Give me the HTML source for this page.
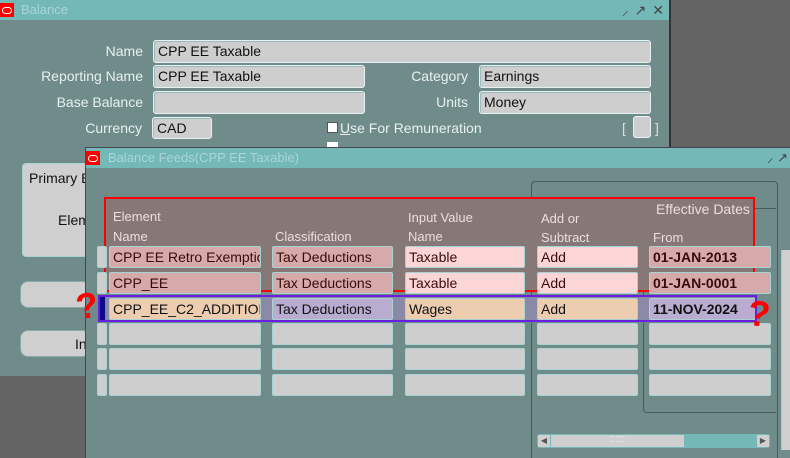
<!DOCTYPE html>
<html style="width:790px;height:458px;overflow:hidden"><head><style>
*{margin:0;padding:0;box-sizing:border-box}
body{width:790px;height:458px;position:relative;overflow:hidden;background:#646464;font-family:"Liberation Sans",sans-serif;font-size:14px}
.a{position:absolute}
.lbl{position:absolute;color:#e8f0f0;text-align:right;white-space:nowrap}
.f{position:absolute;background:#cecece;border:1px solid #e6f2f2;border-radius:3px;color:#111;padding:2px 4px;white-space:nowrap;overflow:hidden;line-height:17px;box-shadow:inset 1px 1px 0 #9bb}
.c{position:absolute;background:#cecece;border:1px solid #a9d2d2;border-radius:2px;color:#3a0a0a;padding:0 3px;white-space:nowrap;overflow:hidden;line-height:20px;font-size:14px}
.title{position:absolute;background:#74b8b8;color:#a9d6d6;font-size:13px;line-height:20px}
.logo{position:absolute;background:#f00;width:14px;height:14px;top:3px;left:0}
.logo:after{content:"";position:absolute;left:2px;top:4px;width:8px;height:5px;border:1.5px solid #fff;border-radius:4px}
.h{position:absolute;color:#ecdede;font-size:13px}
</style></head><body>
<div class="a" style="left:0;top:0;width:671px;height:376px;background:#6f8c8a;border-right:2px solid #333"></div>
<div class="title" style="left:0;top:0;width:669px;height:20px"><div class="logo"></div><span style="position:absolute;left:21px">Balance</span>
<span style="position:absolute;right:4px;top:0;color:#444;font-size:14px;letter-spacing:1px">⸝ ↗ ✕</span></div>
<div class="lbl" style="left:0;width:143px;top:43px">Name</div>
<div class="lbl" style="left:0;width:143px;top:68px">Reporting Name</div>
<div class="lbl" style="left:0;width:143px;top:94px">Base Balance</div>
<div class="lbl" style="left:0;width:142px;top:120px">Currency</div>
<div class="f" style="left:153px;top:40px;width:498px;height:23px">CPP EE Taxable</div>
<div class="f" style="left:153px;top:65px;width:212px;height:23px">CPP EE Taxable</div>
<div class="f" style="left:153px;top:91px;width:212px;height:23px"></div>
<div class="f" style="left:152px;top:117px;width:60px;height:22px">CAD</div>
<div class="lbl" style="left:380px;width:88px;top:68px">Category</div>
<div class="lbl" style="left:380px;width:88px;top:94px">Units</div>
<div class="f" style="left:479px;top:65px;width:172px;height:23px">Earnings</div>
<div class="f" style="left:479px;top:91px;width:172px;height:23px">Money</div>
<div class="a" style="left:327px;top:122px;width:11px;height:11px;background:#fff;border:1px solid #555"></div>
<div class="lbl" style="left:340px;top:120px;text-align:left"><u>U</u>se For Remuneration</div>
<div class="a" style="left:327px;top:142px;width:11px;height:5px;background:#fff"></div>
<div class="lbl" style="left:622px;top:120px;color:#ddd">[</div>
<div class="a" style="left:633px;top:116px;width:18px;height:22px;background:#cecece;border:1px solid #e6f2f2;border-radius:3px"></div>
<div class="lbl" style="left:655px;top:120px;color:#ddd">]</div>
<div class="a" style="left:22px;top:163px;width:70px;height:94px;background:#cfcfcf;border:1px solid #a9d2d2;border-radius:4px"></div>
<div class="a" style="left:29px;top:170px;color:#111">Primary B</div>
<div class="a" style="left:58px;top:212px;color:#111">Elem</div>
<div class="a" style="left:20px;top:281px;width:70px;height:27px;background:#cfcfcf;border:1px solid #8aa;border-radius:8px"></div>
<div class="a" style="left:20px;top:330px;width:70px;height:27px;background:#cfcfcf;border:1px solid #8aa;border-radius:8px"></div>
<div class="a" style="left:75px;top:336px;color:#111">In</div>
<div class="a" style="left:85px;top:147px;width:705px;height:311px;background:#6f8c8a;border-left:1px solid #445;border-top:1px solid #445"></div>
<div class="title" style="left:86px;top:148px;width:704px;height:20px"><div class="logo"></div><span style="position:absolute;left:22px">Balance Feeds(CPP EE Taxable)</span>
<span style="position:absolute;right:2px;top:0;color:#444">⸝ ↗</span></div>
<div class="a" style="left:531px;top:181px;width:247px;height:277px;border:1px solid #4a5a5a;border-bottom:none;border-radius:4px 4px 0 0"></div>
<div class="a" style="left:643px;top:208px;width:133px;height:205px;border-left:1px solid #4a5a5a;border-bottom:1px solid #4a5a5a;border-top:1px solid #4a5a5a;border-radius:4px 0 0 4px"></div>
<div class="a" style="left:104px;top:197px;width:651px;height:95px;background:#877878"></div>
<div class="a" style="left:104px;top:197px;width:651px;height:95px;border:2px solid #f00"></div>
<div class="a" style="left:650px;top:199px;width:103px;height:18px;background:#877878"></div>
<div class="h" style="left:656px;top:201px;font-size:14px">Effective Dates</div>
<div class="h" style="left:113px;top:209px">Element</div>
<div class="h" style="left:113px;top:229px">Name</div>
<div class="h" style="left:275px;top:229px">Classification</div>
<div class="h" style="left:408px;top:210px">Input Value</div>
<div class="h" style="left:408px;top:229px">Name</div>
<div class="h" style="left:541px;top:211px">Add or</div>
<div class="h" style="left:541px;top:230px">Subtract</div>
<div class="h" style="left:653px;top:230px">From</div>
<div class="c" style="left:97px;top:246px;width:10px;height:22px"></div>
<div class="c" style="left:109px;top:246px;width:152px;height:22px;background:#d6aaaa">CPP EE Retro Exemptio</div>
<div class="c" style="left:272px;top:246px;width:121px;height:22px;background:#d6aaaa">Tax Deductions</div>
<div class="c" style="left:405px;top:246px;width:120px;height:22px;background:#fcd6d6">Taxable</div>
<div class="c" style="left:537px;top:246px;width:101px;height:22px;background:#fcd6d6">Add</div>
<div class="c" style="left:649px;top:246px;width:122px;height:22px;background:#d6aaaa;font-weight:bold">01-JAN-2013</div>
<div class="c" style="left:97px;top:272px;width:10px;height:22px"></div>
<div class="c" style="left:109px;top:272px;width:152px;height:22px;background:#d6aaaa">CPP_EE</div>
<div class="c" style="left:272px;top:272px;width:121px;height:22px;background:#d6aaaa">Tax Deductions</div>
<div class="c" style="left:405px;top:272px;width:120px;height:22px;background:#fcd6d6">Taxable</div>
<div class="c" style="left:537px;top:272px;width:101px;height:22px;background:#fcd6d6">Add</div>
<div class="c" style="left:649px;top:272px;width:122px;height:22px;background:#d6aaaa;font-weight:bold">01-JAN-0001</div>
<div class="a" style="left:99px;top:297px;width:6px;height:23px;background:#0a0a8a"></div>
<div class="a" style="left:106px;top:297px;width:650px;height:23px;background:#8a8aa6"></div>
<div class="c" style="left:109px;top:298px;width:152px;height:22px;background:#eccdb0;color:#111">CPP_EE_C2_ADDITION</div>
<div class="c" style="left:272px;top:298px;width:121px;height:22px;background:#b9acd0;color:#111">Tax Deductions</div>
<div class="c" style="left:405px;top:298px;width:120px;height:22px;background:#eccdb0;color:#111">Wages</div>
<div class="c" style="left:537px;top:298px;width:101px;height:22px;background:#eccdb0;color:#111">Add</div>
<div class="c" style="left:649px;top:298px;width:108px;height:22px;background:#b9acd0;color:#111;font-weight:bold">11-NOV-2024</div>
<div class="a" style="left:98px;top:295px;width:659px;height:27px;border:2px solid #6a1ee0"></div>
<div class="c" style="left:97px;top:323px;width:10px;height:22px"></div><div class="c" style="left:109px;top:323px;width:152px;height:22px"></div><div class="c" style="left:272px;top:323px;width:121px;height:22px"></div><div class="c" style="left:405px;top:323px;width:120px;height:22px"></div><div class="c" style="left:537px;top:323px;width:101px;height:22px"></div><div class="c" style="left:649px;top:323px;width:122px;height:22px"></div>
<div class="c" style="left:97px;top:348px;width:10px;height:22px"></div><div class="c" style="left:109px;top:348px;width:152px;height:22px"></div><div class="c" style="left:272px;top:348px;width:121px;height:22px"></div><div class="c" style="left:405px;top:348px;width:120px;height:22px"></div><div class="c" style="left:537px;top:348px;width:101px;height:22px"></div><div class="c" style="left:649px;top:348px;width:122px;height:22px"></div>
<div class="c" style="left:97px;top:374px;width:10px;height:22px"></div><div class="c" style="left:109px;top:374px;width:152px;height:22px"></div><div class="c" style="left:272px;top:374px;width:121px;height:22px"></div><div class="c" style="left:405px;top:374px;width:120px;height:22px"></div><div class="c" style="left:537px;top:374px;width:101px;height:22px"></div><div class="c" style="left:649px;top:374px;width:122px;height:22px"></div>
<div class="a" style="left:781px;top:250px;width:9px;height:200px;background:#cfcfcf;border-left:1px solid #9cc"></div>
<div class="a" style="left:537px;top:434px;width:233px;height:14px;background:#74b8b8;border-radius:3px"></div>
<div class="a" style="left:538px;top:435px;width:12px;height:12px;background:#cfcfcf;font-size:8px;color:#555;text-align:center;line-height:12px">◀</div>
<div class="a" style="left:551px;top:435px;width:133px;height:12px;background:#cfcfcf;font-size:8px;color:#fff;text-align:center;line-height:10px">⁚⁚⁚⁚⁚⁚</div>
<div class="a" style="left:757px;top:435px;width:12px;height:12px;background:#cfcfcf;font-size:8px;color:#555;text-align:center;line-height:12px">▶</div>
<div class="a" style="left:76px;top:285px;color:#f00;font-weight:bold;font-size:36px;font-family:'Liberation Sans',sans-serif;transform:rotate(-8deg)">?</div>
<div class="a" style="left:748px;top:293px;color:#f00;font-weight:bold;font-size:36px;font-family:'Liberation Sans',sans-serif;transform:rotate(8deg)">?</div>
</body></html>
